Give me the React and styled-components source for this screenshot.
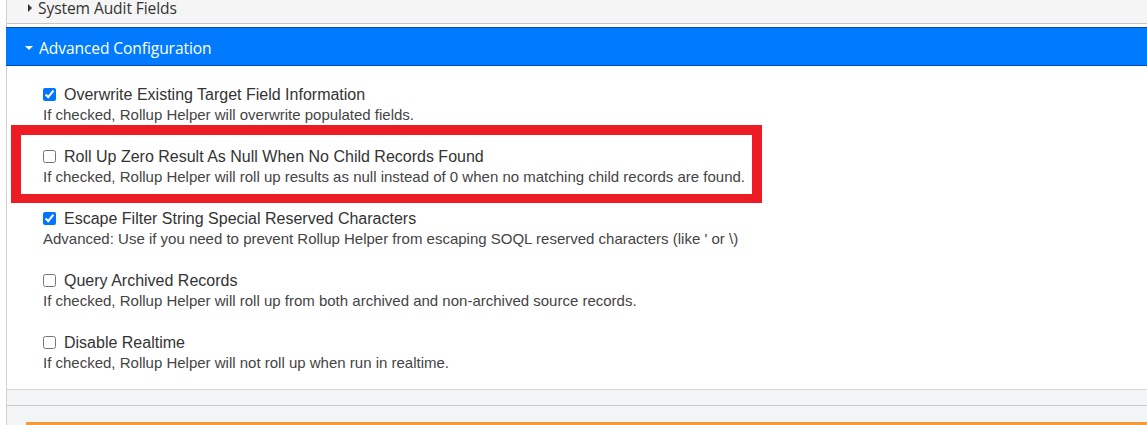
import React from "react";
import styled, { createGlobalStyle } from "styled-components";

const GlobalStyle = createGlobalStyle`
  html, body {
    margin: 0;
    padding: 0;
    background: #ffffff;
    overflow: hidden;
  }
`;

const options = [
  {
    id: "overwrite",
    label: "Overwrite Existing Target Field Information",
    help: "If checked, Rollup Helper will overwrite populated fields.",
    checked: true,
  },
  {
    id: "zeroNull",
    label: "Roll Up Zero Result As Null When No Child Records Found",
    help: "If checked, Rollup Helper will roll up results as null instead of 0 when no matching child records are found.",
    checked: false,
    highlight: true,
  },
  {
    id: "escape",
    label: "Escape Filter String Special Reserved Characters",
    help: "Advanced: Use if you need to prevent Rollup Helper from escaping SOQL reserved characters (like ' or \\)",
    checked: true,
  },
  {
    id: "archived",
    label: "Query Archived Records",
    help: "If checked, Rollup Helper will roll up from both archived and non-archived source records.",
    checked: false,
  },
  {
    id: "realtime",
    label: "Disable Realtime",
    help: "If checked, Rollup Helper will not roll up when run in realtime.",
    checked: false,
  },
];

const App = () => {
  return (
    <>
      <GlobalStyle />
      <Page>
        <CollapsedSection>
          <CaretRight />
          <SectionTitle>System Audit Fields</SectionTitle>
        </CollapsedSection>

        <SectionHeader>
          <CaretDown />
          <SectionTitle>Advanced Configuration</SectionTitle>
        </SectionHeader>

        <SectionBody>
          {options.map((opt) => (
            <OptionItem key={opt.id} $highlight={opt.highlight}>
              <OptionLabel htmlFor={opt.id}>
                <Checkbox
                  id={opt.id}
                  type="checkbox"
                  defaultChecked={opt.checked}
                />
                {opt.label}
              </OptionLabel>
              <OptionHelp>{opt.help}</OptionHelp>
            </OptionItem>
          ))}
        </SectionBody>

        <Footer>
          <FooterRow />
          <FooterRow>
            <OrangeBar />
          </FooterRow>
        </Footer>
      </Page>
    </>
  );
};

const Page = styled.div`
  margin-left: 6px;
  border-left: 1px solid #d2d2d2;
  min-height: 425px;
  display: flex;
  flex-direction: column;
`;

const CollapsedSection = styled.div`
  height: 24px;
  box-sizing: border-box;
  display: flex;
  align-items: center;
  padding: 0 0 8px 21px;
  background: #f5f5f5;
  border-bottom: 1px solid #c4c4c8;
  color: #333;
  overflow: hidden;
`;

const SectionHeader = styled.div`
  margin-top: 3px;
  margin-left: -1px;
  height: 39px;
  box-sizing: border-box;
  display: flex;
  align-items: center;
  padding: 2px 0 0 19px;
  background: #007bff;
  border-top: 1px solid #0049b8;
  border-bottom: 1px solid #0049b8;
  color: #ffffff;
`;

const SectionTitle = styled.span`
  font-family: "Open Sans", "Noto Sans", sans-serif;
  font-size: 15.6px;
  line-height: 20px;
  letter-spacing: -0.1px;
  white-space: nowrap;
`;

const CaretRight = styled.span`
  width: 0;
  height: 0;
  margin-right: 6px;
  border-top: 4px solid transparent;
  border-bottom: 4px solid transparent;
  border-left: 4px solid #333;
`;

const CaretDown = styled.span`
  width: 0;
  height: 0;
  margin-right: 6px;
  border-left: 4.5px solid transparent;
  border-right: 4.5px solid transparent;
  border-top: 4.5px solid #ffffff;
`;

const SectionBody = styled.div`
  padding: 19px 0 16px 36px;
  border-bottom: 1px solid #d6d6d6;
  background: #ffffff;
`;

const OptionItem = styled.div`
  position: relative;
  margin-bottom: 22px;

  &:last-child {
    margin-bottom: 0;
  }

  ${({ $highlight }) =>
    $highlight &&
    `
    &::before {
      content: "";
      position: absolute;
      left: -32px;
      top: -22px;
      width: 731px;
      height: 59px;
      border: 10px solid #ed1c24;
      border-bottom-width: 9.5px;
      pointer-events: none;
    }
  `}
`;

const OptionLabel = styled.label`
  display: flex;
  align-items: center;
  height: 20px;
  font-family: "Liberation Sans", Arial, sans-serif;
  font-size: 16px;
  color: #333;
  white-space: nowrap;
`;

const Checkbox = styled.input`
  width: 13px;
  height: 13px;
  margin: 0 8px 2px 0;
  accent-color: #0075ff;
`;

const OptionHelp = styled.div`
  height: 20px;
  line-height: 20px;
  font-family: "Liberation Sans", Arial, sans-serif;
  font-size: 15px;
  color: #444;
  white-space: nowrap;
`;

const Footer = styled.div`
  flex: 1;
  background: #f4f5f7;
`;

const FooterRow = styled.div`
  height: 16px;

  &:first-child {
    height: 15px;
    border-bottom: 1px solid #c9cbcf;
  }
`;

const OrangeBar = styled.div`
  margin: 16px 0 0 19px;
  height: 6px;
  background: #f59a3c;
`;

export default App;
